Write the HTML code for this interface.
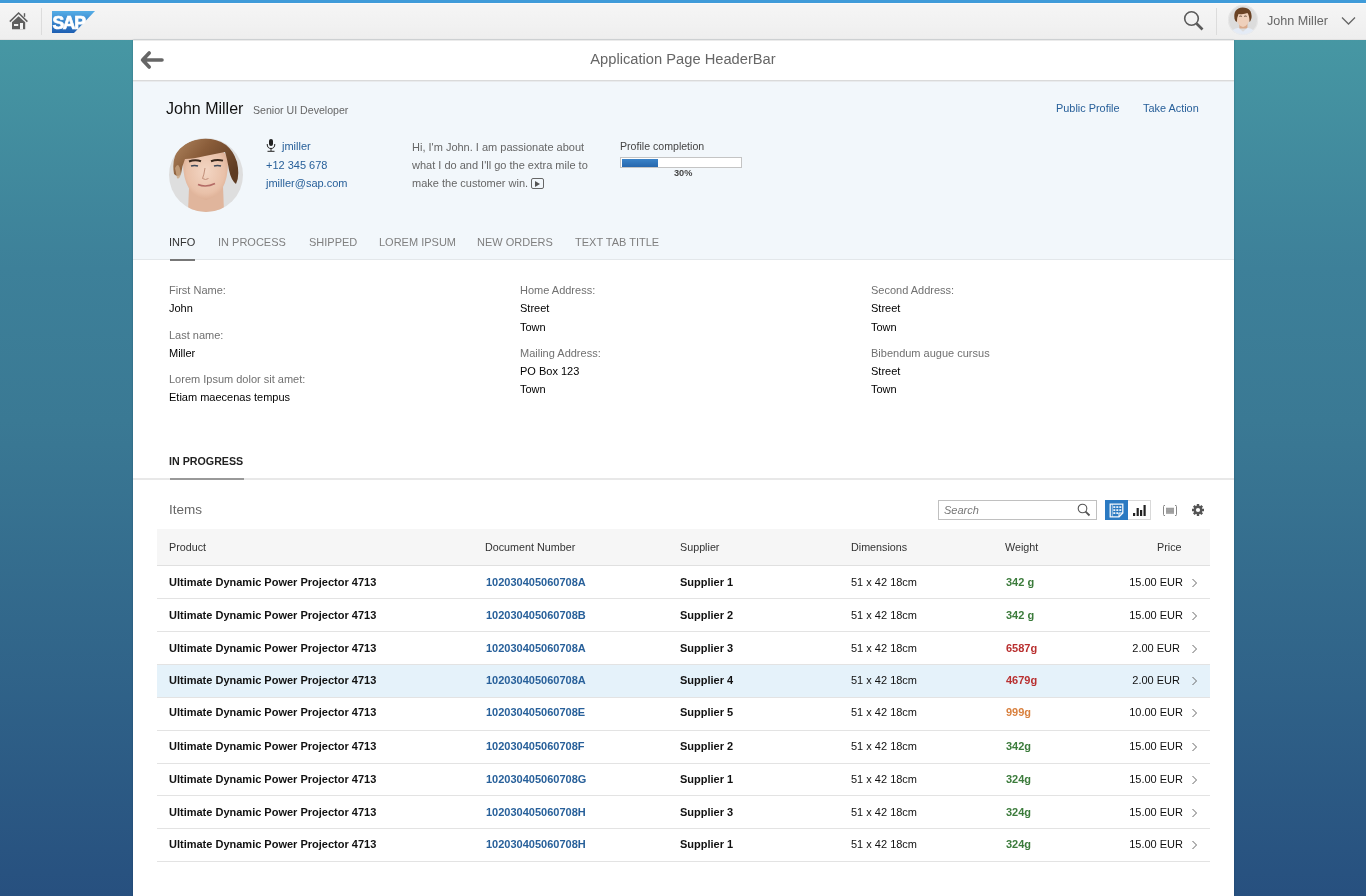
<!DOCTYPE html>
<html><head><meta charset="utf-8">
<style>
*{margin:0;padding:0;box-sizing:border-box}
html,body{width:1366px;height:896px;overflow:hidden}
body{font-family:"Liberation Sans",sans-serif;position:relative;background:linear-gradient(to bottom,#489ba5 0%,#3d8099 30%,#3a7994 47%,#27507f 100%);color:#333}
.a{position:absolute;white-space:nowrap;will-change:transform}
.lnk{color:#28609a!important}
.lbl{color:#707070;font-size:11px}
.val{color:#000;font-size:11px}
.tab{font-size:11px;color:#7f7f7f;top:236px}
.th{font-size:10.75px;color:#333;top:541px}
.c{font-size:11px;color:#111}
.b{font-weight:bold;color:#111}
</style></head><body>
<!-- shell -->
<div class="a" style="left:0;top:0;width:1366px;height:3px;background:#3f9bd9"></div>
<div class="a" style="left:0;top:3px;width:1366px;height:37px;background:linear-gradient(#f5f5f5,#f1f1f1 60%,#eeeeee);border-top:1px solid #fcfafa;border-bottom:1px solid #e2e2e2"></div>
<!-- home icon -->
<svg class="a" style="left:9px;top:11px" width="20" height="20" viewBox="0 0 20 20">
  <path d="M0.8 10.6 L9.6 2 L18.4 10.6" fill="none" stroke="#5e5e5e" stroke-width="1.5"/>
  <rect x="14.8" y="2.2" width="1.4" height="3.6" fill="#5e5e5e"/>
  <path d="M3 11.2 L9.6 5.2 L16.2 11.2 V18.2 H3 Z" fill="#5e5e5e"/>
  <rect x="5" y="13" width="4.2" height="2" fill="#f2f2f2"/>
  <rect x="11" y="12" width="3" height="6.2" fill="#f2f2f2"/>
</svg>
<div class="a" style="left:41px;top:8px;width:1px;height:27px;background:#dcdcdc"></div>
<!-- SAP logo -->
<svg class="a" style="left:52px;top:11px" width="44" height="22" viewBox="0 0 44 22">
  <defs><linearGradient id="sg" x1="0" y1="0" x2="0" y2="1"><stop offset="0" stop-color="#55ade6"/><stop offset="1" stop-color="#1d5eb2"/></linearGradient></defs>
  <path d="M0 0 H43 L22 22 H0 Z" fill="url(#sg)"/>
  <text x="0.5" y="17.6" font-family="Liberation Sans" font-weight="bold" font-size="17.6" fill="#fff" stroke="#fff" stroke-width="0.7" letter-spacing="-1.4">SAP</text>
</svg>
<!-- search -->
<svg class="a" style="left:1183px;top:10px" width="22" height="22" viewBox="0 0 22 22">
  <circle cx="8.5" cy="8.5" r="6.8" fill="none" stroke="#5a5a5a" stroke-width="1.6"/>
  <path d="M13.5 13.5 L19.5 19.5" stroke="#5a5a5a" stroke-width="2.6" stroke-linecap="butt"/>
</svg>
<div class="a" style="left:1216px;top:8px;width:1px;height:27px;background:#dcdcdc"></div>
<!-- shell avatar -->
<svg class="a" style="left:1228px;top:5px" width="30" height="30" viewBox="0 0 74 74">
  <defs><clipPath id="cp2"><circle cx="37" cy="37" r="37"/></clipPath></defs>
  <g clip-path="url(#cp2)">
  <rect width="74" height="74" fill="#dcdcdc"/>
  <path d="M28 40 L28 58 L48 58 L48 40 Z" fill="#d9a98a"/>
  <path d="M20 28 Q20 50 37 54 Q54 50 54 28 Q54 14 37 14 Q20 14 20 28Z" fill="#efd0bb"/>
  <path d="M16 34 Q12 8 36 6 Q60 6 58 32 Q56 40 53 42 Q53 26 48 20 Q38 24 26 22 Q22 30 22 42 Q18 42 16 34 Z" fill="#6a4224"/>
  <path d="M28 28 Q31 26.5 34 28 M40 28 Q43 26.5 46 28" stroke="#3a2616" stroke-width="2" fill="none"/>
  <path d="M2 74 Q6 60 26 56 L37 66 L48 56 Q68 60 72 74 Z" fill="#e4ebf6"/>
  </g>
  <circle cx="37" cy="37" r="36.2" fill="none" stroke="#ececec" stroke-width="1.6"/>
</svg>
<div class="a" style="left:1267px;top:14px;font-size:12.6px;color:#666">John Miller</div>
<svg class="a" style="left:1341px;top:16px" width="15" height="10" viewBox="0 0 15 10">
  <path d="M1 1.5 L7.5 8 L14 1.5" fill="none" stroke="#666" stroke-width="1.3"/>
</svg>

<!-- page -->
<div class="a" style="left:133px;top:40px;width:1101px;height:856px;background:#fff;box-shadow:0 0 1.5px rgba(0,40,60,0.35)"></div>
<div class="a" style="left:133px;top:40px;width:1101px;height:1px;background:#ebebeb"></div><div class="a" style="left:133px;top:80px;width:1101px;height:1px;background:#dadada"></div><div class="a" style="left:133px;top:81px;width:1101px;height:1px;background:#e9ebed"></div>
<svg class="a" style="left:140px;top:50px" width="26" height="20" viewBox="0 0 26 20">
  <path d="M2.6 10 L9.2 3 M2.6 10 L9.2 17 M2.6 10 H22" fill="none" stroke="#666" stroke-width="3.6" stroke-linecap="round" stroke-linejoin="round"/>
</svg>
<div class="a" style="left:133px;width:1100px;text-align:center;top:51px;font-size:14.7px;color:#666">Application Page HeaderBar</div>

<!-- profile header -->
<div class="a" style="left:133px;top:82px;width:1101px;height:177px;background:#f2f7fb"></div>
<div class="a" style="left:133px;top:259px;width:1101px;height:1px;background:#e3e7ea"></div>
<div class="a" style="left:166px;top:100px;font-size:16px;color:#111">John Miller</div>
<div class="a" style="left:253px;top:104px;font-size:10.6px;color:#666">Senior UI Developer</div>
<div class="a lnk" style="left:1056px;top:102px;font-size:10.9px">Public Profile</div>
<div class="a lnk" style="left:1143px;top:102px;font-size:10.9px">Take Action</div>

<!-- avatar big -->
<svg class="a" style="left:169px;top:138px" width="74" height="74" viewBox="0 0 74 74">
  <defs><clipPath id="cp1"><circle cx="37" cy="37" r="37"/></clipPath>
  <linearGradient id="hg" x1="0" y1="0" x2="1" y2="0.6"><stop offset="0" stop-color="#b08660"/><stop offset="0.45" stop-color="#8a5d3a"/><stop offset="1" stop-color="#5e3b22"/></linearGradient>
  <radialGradient id="fg" cx="0.5" cy="0.45" r="0.6"><stop offset="0" stop-color="#f3d6c4"/><stop offset="0.7" stop-color="#e9c1a9"/><stop offset="1" stop-color="#d9a98e"/></radialGradient></defs>
  <g clip-path="url(#cp1)">
  <rect width="74" height="74" fill="#dedede"/>
  <path d="M20 50 L19 74 L55 74 L54 48 Z" fill="#e0b59c"/>
  <path d="M14 24 Q14 57 37 62 Q59 57 59 24 Q59 10 37 10 Q14 10 14 24Z" fill="url(#fg)"/>
  <path d="M5 36 Q0 6 32 1 Q60 -1 68 24 Q71 38 67 46 Q62 42 60 32 Q58 20 56 14 Q46 16 36 18 Q24 21 16 21 Q13 28 12 36 Q9 40 5 36 Z" fill="url(#hg)"/>
  <path d="M6 30 Q10 22 12 36 Q10 42 8 40 Z" fill="#c9a582" opacity="0.8"/>
  <path d="M20 23.5 Q26 21 32 23.2 M42 23.2 Q48 21 54 22.6" stroke="#3a281c" stroke-width="2" fill="none"/>
  <path d="M22 28 Q25.5 26.8 29 28 M45 28 Q48.5 26.8 52 28" stroke="#3f4a5a" stroke-width="1.5" fill="none"/>
  <path d="M36 30 Q35 37 33.5 40.5 Q36.5 42.5 39.5 40.5" stroke="#c08e78" stroke-width="1" fill="none"/>
  <path d="M29 46.5 Q37 50 46 45.5" stroke="#b46c66" stroke-width="1.6" fill="none"/>
  </g>
</svg>

<!-- contact -->
<svg class="a" style="left:266px;top:139px" width="10" height="13" viewBox="0 0 10 13">
  <rect x="3" y="0" width="4" height="7" rx="2" fill="#222"/>
  <path d="M1.2 5 Q1.2 9.5 5 9.5 Q8.8 9.5 8.8 5" fill="none" stroke="#222" stroke-width="1"/>
  <path d="M5 9.5 V12 M1.5 12.3 H8.5" stroke="#222" stroke-width="1"/>
</svg>
<div class="a lnk" style="left:282px;top:140px;font-size:11px">jmiller</div>
<div class="a lnk" style="left:266px;top:159px;font-size:11px">+12 345 678</div>
<div class="a lnk" style="left:266px;top:177px;font-size:11px">jmiller@sap.com</div>

<div class="a" style="left:412px;top:138px;font-size:11px;color:#666;line-height:18px">Hi, I'm John. I am passionate about<br>what I do and I'll go the extra mile to<br>make the customer win. <span style="display:inline-block;width:13px;height:11px;border:1px solid #666;border-radius:2px;vertical-align:-2px;position:relative"><span style="position:absolute;left:3px;top:1.5px;border-left:5px solid #555;border-top:3px solid transparent;border-bottom:3px solid transparent"></span></span></div>

<div class="a" style="left:620px;top:140px;font-size:10.6px;color:#444">Profile completion</div>
<div class="a" style="left:620px;top:157px;width:122px;height:11px;background:#fff;border:1px solid #c4c4c4"></div>
<div class="a" style="left:622px;top:158.5px;width:36px;height:7.5px;background:linear-gradient(#3b83c8,#2767ad)"></div>
<div class="a" style="left:674px;top:168px;font-size:9.2px;font-weight:bold;color:#444">30%</div>

<!-- tabs -->
<div class="a tab" style="left:169px;color:#333">INFO</div>
<div class="a" style="left:170px;top:258.5px;width:25px;height:1.5px;background:#777"></div>
<div class="a tab" style="left:218px">IN PROCESS</div>
<div class="a tab" style="left:309px">SHIPPED</div>
<div class="a tab" style="left:379px">LOREM IPSUM</div>
<div class="a tab" style="left:477px">NEW ORDERS</div>
<div class="a tab" style="left:575px">TEXT TAB TITLE</div>

<!-- form -->
<div class="a lbl" style="left:169px;top:284px">First Name:</div>
<div class="a val" style="left:169px;top:302px">John</div>
<div class="a lbl" style="left:169px;top:329px">Last name:</div>
<div class="a val" style="left:169px;top:347px">Miller</div>
<div class="a lbl" style="left:169px;top:373px">Lorem Ipsum dolor sit amet:</div>
<div class="a val" style="left:169px;top:391px">Etiam maecenas tempus</div>

<div class="a lbl" style="left:520px;top:284px">Home Address:</div>
<div class="a val" style="left:520px;top:302px">Street</div>
<div class="a val" style="left:520px;top:321px">Town</div>
<div class="a lbl" style="left:520px;top:347px">Mailing Address:</div>
<div class="a val" style="left:520px;top:365px">PO Box 123</div>
<div class="a val" style="left:520px;top:383px">Town</div>

<div class="a lbl" style="left:871px;top:284px">Second Address:</div>
<div class="a val" style="left:871px;top:302px">Street</div>
<div class="a val" style="left:871px;top:321px">Town</div>
<div class="a lbl" style="left:871px;top:347px">Bibendum augue cursus</div>
<div class="a val" style="left:871px;top:365px">Street</div>
<div class="a val" style="left:871px;top:383px">Town</div>

<!-- section tab -->
<div class="a b" style="left:169px;top:455px;font-size:10.7px;color:#222">IN PROGRESS</div>
<div class="a" style="left:133px;top:478px;width:1101px;height:2px;background:#e8e8e8"></div>
<div class="a" style="left:170px;top:478px;width:74px;height:2px;background:#999"></div>

<!-- toolbar -->
<div class="a" style="left:169px;top:502px;font-size:13.5px;color:#666">Items</div>
<div class="a" style="left:938px;top:500px;width:159px;height:20px;border:1px solid #c0c0c0;background:#fff"></div>
<div class="a" style="left:944px;top:504px;font-size:11px;color:#777;font-style:italic">Search</div>
<svg class="a" style="left:1077px;top:503px" width="14" height="14" viewBox="0 0 14 14">
  <circle cx="5.5" cy="5.5" r="4.3" fill="none" stroke="#555" stroke-width="1.1"/>
  <path d="M8.6 8.6 L12.5 12.5" stroke="#555" stroke-width="1.8"/>
</svg>
<div class="a" style="left:1105px;top:500px;width:46px;height:20px;border:1px solid #d9d9d9;background:#fff"></div>
<div class="a" style="left:1105px;top:500px;width:23px;height:20px;background:#2b7ac2"></div>
<svg class="a" style="left:1109px;top:503px" width="15" height="15" viewBox="0 0 15 15">
  <path d="M1.2 1.2 H13.8 V10 L10 13.8 H1.2 Z" fill="none" stroke="#fff" stroke-width="1.3" opacity="0.95"/>
  <path d="M3.3 1.2 V13.8" stroke="#fff" stroke-width="0.9" opacity="0.6"/>
  <g fill="#fff" opacity="0.9"><rect x="4.3" y="3.2" width="2" height="1.8"/><rect x="7.3" y="3.2" width="2" height="1.8"/><rect x="10.3" y="3.2" width="2" height="1.8"/>
  <rect x="4.3" y="6.2" width="2" height="1.8"/><rect x="7.3" y="6.2" width="2" height="1.8"/><rect x="10.3" y="6.2" width="2" height="1.8"/>
  <rect x="4.3" y="9.2" width="2" height="1.8"/><rect x="7.3" y="9.2" width="2" height="1.8"/></g>
  <path d="M10 13.8 V10 H13.8" fill="none" stroke="#fff" stroke-width="1"/>
</svg>
<svg class="a" style="left:1132px;top:504px" width="15" height="14" viewBox="0 0 15 14">
  <rect x="1" y="9" width="2.2" height="3" fill="#222"/>
  <rect x="4.6" y="4" width="2.2" height="8" fill="#222"/>
  <rect x="8" y="6" width="2.2" height="6" fill="#222"/>
  <rect x="11.5" y="1" width="2.2" height="11" fill="#222"/>
</svg>
<svg class="a" style="left:1163px;top:505px" width="14" height="11" viewBox="0 0 14 11">
  <path d="M2 0.5 H1 Q0.5 0.5 0.5 1.5 V9.5 Q0.5 10.5 1 10.5 H2 M12 0.5 H13 Q13.5 0.5 13.5 1.5 V9.5 Q13.5 10.5 13 10.5 H12" fill="none" stroke="#888" stroke-width="1"/>
  <rect x="3" y="2.7" width="8" height="6" fill="#aaa"/>
  <path d="M3 3.7 H11 M3 5.2 H11 M3 6.7 H11 M3 8.2 H11" stroke="#888" stroke-width="0.5"/>
</svg>
<svg class="a" style="left:1191px;top:503px" width="14" height="14" viewBox="0 0 14 14">
  <g stroke="#555" stroke-width="2.4"><path d="M7 1 V13 M1 7 H13 M2.8 2.8 L11.2 11.2 M11.2 2.8 L2.8 11.2"/></g>
  <circle cx="7" cy="7" r="4.4" fill="#555"/>
  <circle cx="7" cy="7" r="2.1" fill="#fff"/>
</svg>

<!-- table header -->
<div class="a" style="left:157px;top:529px;width:1053px;height:37px;background:#f6f6f6;border-bottom:1px solid #e0e0e0"></div>
<div class="a th" style="left:169px">Product</div>
<div class="a th" style="left:485px">Document Number</div>
<div class="a th" style="left:680px">Supplier</div>
<div class="a th" style="left:851px">Dimensions</div>
<div class="a th" style="left:1005px">Weight</div>
<div class="a th" style="left:1157px">Price</div>
<!--ROWS-->
<div class="a" style="left:157px;top:664px;width:1053px;height:33px;background:#e5f2fa"></div>
<div class="a" style="left:157px;top:598px;width:1053px;height:1px;background:#e3e3e3"></div>
<div class="a" style="left:157px;top:631px;width:1053px;height:1px;background:#e3e3e3"></div>
<div class="a" style="left:157px;top:664px;width:1053px;height:1px;background:#e3e3e3"></div>
<div class="a" style="left:157px;top:697px;width:1053px;height:1px;background:#e3e3e3"></div>
<div class="a" style="left:157px;top:730px;width:1053px;height:1px;background:#e3e3e3"></div>
<div class="a" style="left:157px;top:763px;width:1053px;height:1px;background:#e3e3e3"></div>
<div class="a" style="left:157px;top:795px;width:1053px;height:1px;background:#e3e3e3"></div>
<div class="a" style="left:157px;top:828px;width:1053px;height:1px;background:#e3e3e3"></div>
<div class="a" style="left:157px;top:861px;width:1053px;height:1px;background:#e3e3e3"></div>
<div class="a c b" style="left:169px;top:576px">Ultimate Dynamic Power Projector 4713</div>
<div class="a c b lnk" style="left:486px;top:576px">102030405060708A</div>
<div class="a c b" style="left:680px;top:576px">Supplier 1</div>
<div class="a c" style="left:851px;top:576px">51 x 42 18cm</div>
<div class="a c b" style="left:1006px;top:576px;color:#3b7b3b">342 g</div>
<div class="a c" style="left:1083px;width:100px;text-align:right;top:576px">15.00 EUR</div>
<svg class="a" style="left:1191px;top:575px" width="7" height="16" viewBox="0 0 7 16"><path d="M1.5 4 L5.5 8 L1.5 12" fill="none" stroke="#666" stroke-width="1"/></svg>
<div class="a c b" style="left:169px;top:609px">Ultimate Dynamic Power Projector 4713</div>
<div class="a c b lnk" style="left:486px;top:609px">102030405060708B</div>
<div class="a c b" style="left:680px;top:609px">Supplier 2</div>
<div class="a c" style="left:851px;top:609px">51 x 42 18cm</div>
<div class="a c b" style="left:1006px;top:609px;color:#3b7b3b">342 g</div>
<div class="a c" style="left:1083px;width:100px;text-align:right;top:609px">15.00 EUR</div>
<svg class="a" style="left:1191px;top:608px" width="7" height="16" viewBox="0 0 7 16"><path d="M1.5 4 L5.5 8 L1.5 12" fill="none" stroke="#666" stroke-width="1"/></svg>
<div class="a c b" style="left:169px;top:642px">Ultimate Dynamic Power Projector 4713</div>
<div class="a c b lnk" style="left:486px;top:642px">102030405060708A</div>
<div class="a c b" style="left:680px;top:642px">Supplier 3</div>
<div class="a c" style="left:851px;top:642px">51 x 42 18cm</div>
<div class="a c b" style="left:1006px;top:642px;color:#b93030">6587g</div>
<div class="a c" style="left:1080px;width:100px;text-align:right;top:642px">2.00 EUR</div>
<svg class="a" style="left:1191px;top:641px" width="7" height="16" viewBox="0 0 7 16"><path d="M1.5 4 L5.5 8 L1.5 12" fill="none" stroke="#666" stroke-width="1"/></svg>
<div class="a c b" style="left:169px;top:674px">Ultimate Dynamic Power Projector 4713</div>
<div class="a c b lnk" style="left:486px;top:674px">102030405060708A</div>
<div class="a c b" style="left:680px;top:674px">Supplier 4</div>
<div class="a c" style="left:851px;top:674px">51 x 42 18cm</div>
<div class="a c b" style="left:1006px;top:674px;color:#b93030">4679g</div>
<div class="a c" style="left:1080px;width:100px;text-align:right;top:674px">2.00 EUR</div>
<svg class="a" style="left:1191px;top:673px" width="7" height="16" viewBox="0 0 7 16"><path d="M1.5 4 L5.5 8 L1.5 12" fill="none" stroke="#666" stroke-width="1"/></svg>
<div class="a c b" style="left:169px;top:706px">Ultimate Dynamic Power Projector 4713</div>
<div class="a c b lnk" style="left:486px;top:706px">102030405060708E</div>
<div class="a c b" style="left:680px;top:706px">Supplier 5</div>
<div class="a c" style="left:851px;top:706px">51 x 42 18cm</div>
<div class="a c b" style="left:1006px;top:706px;color:#d9803e">999g</div>
<div class="a c" style="left:1083px;width:100px;text-align:right;top:706px">10.00 EUR</div>
<svg class="a" style="left:1191px;top:705px" width="7" height="16" viewBox="0 0 7 16"><path d="M1.5 4 L5.5 8 L1.5 12" fill="none" stroke="#666" stroke-width="1"/></svg>
<div class="a c b" style="left:169px;top:740px">Ultimate Dynamic Power Projector 4713</div>
<div class="a c b lnk" style="left:486px;top:740px">102030405060708F</div>
<div class="a c b" style="left:680px;top:740px">Supplier 2</div>
<div class="a c" style="left:851px;top:740px">51 x 42 18cm</div>
<div class="a c b" style="left:1006px;top:740px;color:#3b7b3b">342g</div>
<div class="a c" style="left:1083px;width:100px;text-align:right;top:740px">15.00 EUR</div>
<svg class="a" style="left:1191px;top:739px" width="7" height="16" viewBox="0 0 7 16"><path d="M1.5 4 L5.5 8 L1.5 12" fill="none" stroke="#666" stroke-width="1"/></svg>
<div class="a c b" style="left:169px;top:773px">Ultimate Dynamic Power Projector 4713</div>
<div class="a c b lnk" style="left:486px;top:773px">102030405060708G</div>
<div class="a c b" style="left:680px;top:773px">Supplier 1</div>
<div class="a c" style="left:851px;top:773px">51 x 42 18cm</div>
<div class="a c b" style="left:1006px;top:773px;color:#3b7b3b">324g</div>
<div class="a c" style="left:1083px;width:100px;text-align:right;top:773px">15.00 EUR</div>
<svg class="a" style="left:1191px;top:772px" width="7" height="16" viewBox="0 0 7 16"><path d="M1.5 4 L5.5 8 L1.5 12" fill="none" stroke="#666" stroke-width="1"/></svg>
<div class="a c b" style="left:169px;top:806px">Ultimate Dynamic Power Projector 4713</div>
<div class="a c b lnk" style="left:486px;top:806px">102030405060708H</div>
<div class="a c b" style="left:680px;top:806px">Supplier 3</div>
<div class="a c" style="left:851px;top:806px">51 x 42 18cm</div>
<div class="a c b" style="left:1006px;top:806px;color:#3b7b3b">324g</div>
<div class="a c" style="left:1083px;width:100px;text-align:right;top:806px">15.00 EUR</div>
<svg class="a" style="left:1191px;top:805px" width="7" height="16" viewBox="0 0 7 16"><path d="M1.5 4 L5.5 8 L1.5 12" fill="none" stroke="#666" stroke-width="1"/></svg>
<div class="a c b" style="left:169px;top:838px">Ultimate Dynamic Power Projector 4713</div>
<div class="a c b lnk" style="left:486px;top:838px">102030405060708H</div>
<div class="a c b" style="left:680px;top:838px">Supplier 1</div>
<div class="a c" style="left:851px;top:838px">51 x 42 18cm</div>
<div class="a c b" style="left:1006px;top:838px;color:#3b7b3b">324g</div>
<div class="a c" style="left:1083px;width:100px;text-align:right;top:838px">15.00 EUR</div>
<svg class="a" style="left:1191px;top:837px" width="7" height="16" viewBox="0 0 7 16"><path d="M1.5 4 L5.5 8 L1.5 12" fill="none" stroke="#666" stroke-width="1"/></svg>
<!--/ROWS-->
</body></html>
